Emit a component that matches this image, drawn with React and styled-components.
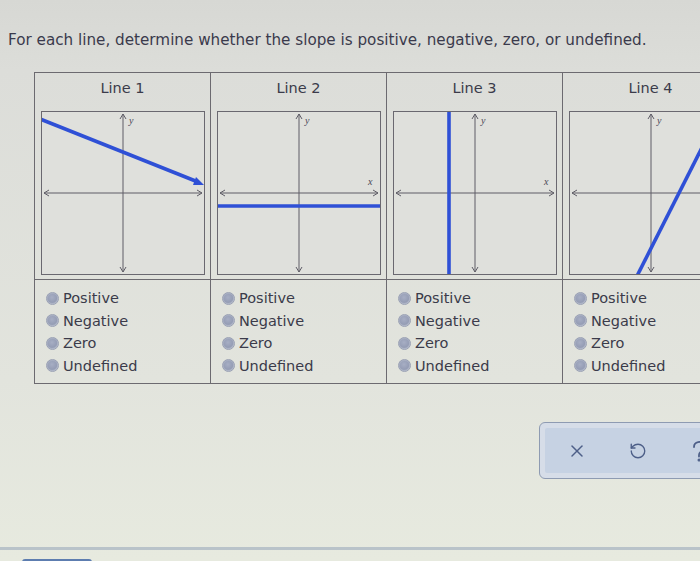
import React from "react";
import styled, { createGlobalStyle } from "styled-components";
import { X, RotateCcw } from "lucide-react";

const GlobalStyle = createGlobalStyle`
  html, body { margin: 0; padding: 0; }
  body {
    width: 700px;
    height: 561px;
    overflow: hidden;
    background: #e2e4de;
    font-family: "DejaVu Sans", Verdana, sans-serif;
    color: #3b3b4a;
  }
`;

const Page = styled.div`
  position: relative;
  width: 700px;
  height: 561px;
  overflow: hidden;
  background: linear-gradient(180deg, #d7d8d4 0px, #dcddd9 70px, #e2e4dd 380px, #e7eadf 561px);
`;

const Prompt = styled.p`
  margin: 0;
  padding: 31px 0 0 8px;
  font-size: 15.2px;
  line-height: 18px;
  color: #3a3a4c;
  white-space: nowrap;
`;

const Table = styled.div`
  margin: 23px 0 0 34px;
  display: grid;
  grid-template-columns: repeat(4, 176px);
  grid-template-rows: 207px 103px;
  width: 704px;
  border-top: 1px solid #6c6a70;
  border-left: 1px solid #6c6a70;
  border-bottom: 1px solid #6c6a70;
`;

const Cell = styled.div`
  border-right: 1px solid #6c6a70;
  border-bottom: ${(p) => (p.$top ? "1px solid #6c6a70" : "none")};
  display: flex;
  flex-direction: column;
  align-items: ${(p) => (p.$top ? "center" : "flex-start")};
  box-sizing: border-box;
`;

const Title = styled.div`
  font-size: 14.5px;
  line-height: 18px;
  margin-top: 6px;
  height: 18px;
  color: #3b3b4a;
`;

const GraphBox = styled.div`
  margin-top: 14px;
  width: 162px;
  height: 162px;
  border: 1px solid #6a6870;
  background: #dfe0dc;
  overflow: hidden;
  svg { display: block; }
`;

const Options = styled.div`
  padding: 7px 0 0 11px;
  display: flex;
  flex-direction: column;
`;

const Option = styled.label`
  display: flex;
  align-items: center;
  gap: 4px;
  height: 22.5px;
  font-size: 14.5px;
  color: #3b3b4a;
`;

const Radio = styled.span`
  width: 11px;
  height: 11px;
  border-radius: 50%;
  border: 1px solid #9aa1b4;
  background: radial-gradient(circle at 45% 40%, #a7aec4 0%, #959db5 55%, #c9ceda 100%);
  box-shadow: inset 0 0 1px #e8ebf1;
  flex: none;
`;

const ActionBox = styled.div`
  margin: 38px 0 0 539px;
  width: 200px;
  height: 57px;
  box-sizing: border-box;
  border: 1px solid #8e9bb2;
  border-radius: 6px;
  background: #d6dde8;
  padding: 5px;
`;

const ActionInner = styled.div`
  height: 100%;
  background: #c6d2e3;
  border-radius: 2px;
  display: flex;
  align-items: center;
  padding-left: 19px;
  gap: 35px;
  color: #4d5f88;
`;

const ActionButton = styled.span`
  width: 26px;
  flex: none;
  display: flex;
  justify-content: center;
  align-items: center;
  color: #4d5f88;
`;

const BottomRule = styled.div`
  margin-top: 68px;
  height: 3px;
  background: #b9c3c9;
`;

const BottomTab = styled.div`
  margin: 9px 0 0 22px;
  width: 70px;
  height: 6px;
  background: #5d7db0;
  border-radius: 3px 3px 0 0;
`;

const AXIS = "#5e5c66";
const LINE = "#2f50d6";

function Axes({ showX = true }) {
  return (
    <g stroke={AXIS} strokeWidth="1" fill="none">
      <line x1="2" y1="81" x2="160" y2="81" />
      <line x1="81" y1="2" x2="81" y2="160" />
      <polyline points="7,78 2,81 7,84" />
      <polyline points="155,78 160,81 155,84" />
      <polyline points="78,7 81,2 84,7" />
      <polyline points="78,155 81,160 84,155" />
      <text x="87" y="12" fontSize="10" fontStyle="italic" fontFamily="'Liberation Serif', serif" fill="#4a4856" stroke="none">y</text>
      {showX && (
        <text x="150" y="73" fontSize="10" fontStyle="italic" fontFamily="'Liberation Serif', serif" fill="#4a4856" stroke="none">x</text>
      )}
    </g>
  );
}

function Graph({ kind }) {
  return (
    <GraphBox>
      <svg width="162" height="162" viewBox="0 0 162 162">
        <Axes showX={kind === 2 || kind === 3} />
        {kind === 1 && (
          <g>
            <line x1="-2" y1="7" x2="156" y2="70" stroke={LINE} strokeWidth="3.6" />
            <polygon points="162,73 151,73 154,65" fill={LINE} />
          </g>
        )}
        {kind === 2 && <line x1="0" y1="94" x2="162" y2="94" stroke={LINE} strokeWidth="3.4" />}
        {kind === 3 && <line x1="55" y1="0" x2="55" y2="162" stroke={LINE} strokeWidth="3.6" />}
        {kind === 4 && <line x1="67" y1="164" x2="152" y2="-4" stroke={LINE} strokeWidth="3.6" />}
      </svg>
    </GraphBox>
  );
}

function HelpHook() {
  return (
    <svg width="16" height="22" viewBox="0 0 16 22" fill="none" stroke="currentColor" strokeWidth="1.8" strokeLinecap="round">
      <path d="M3 7a5 5 0 1 1 7.5 4.3C9 12.2 8 13.2 8 15v1.5" />
      <circle cx="8" cy="20" r="0.6" fill="currentColor" />
    </svg>
  );
}

const choices = ["Positive", "Negative", "Zero", "Undefined"];

export default function App() {
  const lines = [1, 2, 3, 4];
  return (
    <>
      <GlobalStyle />
      <Page>
        <Prompt>For each line, determine whether the slope is positive, negative, zero, or undefined.</Prompt>
        <Table>
          {lines.map((n) => (
            <Cell key={`g${n}`} $top>
              <Title>Line {n}</Title>
              <Graph kind={n} />
            </Cell>
          ))}
          {lines.map((n) => (
            <Cell key={`o${n}`}>
              <Options>
                {choices.map((c) => (
                  <Option key={c}>
                    <Radio />
                    {c}
                  </Option>
                ))}
              </Options>
            </Cell>
          ))}
        </Table>
        <ActionBox>
          <ActionInner>
            <ActionButton><X size={20} strokeWidth={1.8} /></ActionButton>
            <ActionButton><RotateCcw size={18} strokeWidth={1.8} /></ActionButton>
            <ActionButton><HelpHook /></ActionButton>
          </ActionInner>
        </ActionBox>
        <BottomRule />
        <BottomTab />
      </Page>
    </>
  );
}
